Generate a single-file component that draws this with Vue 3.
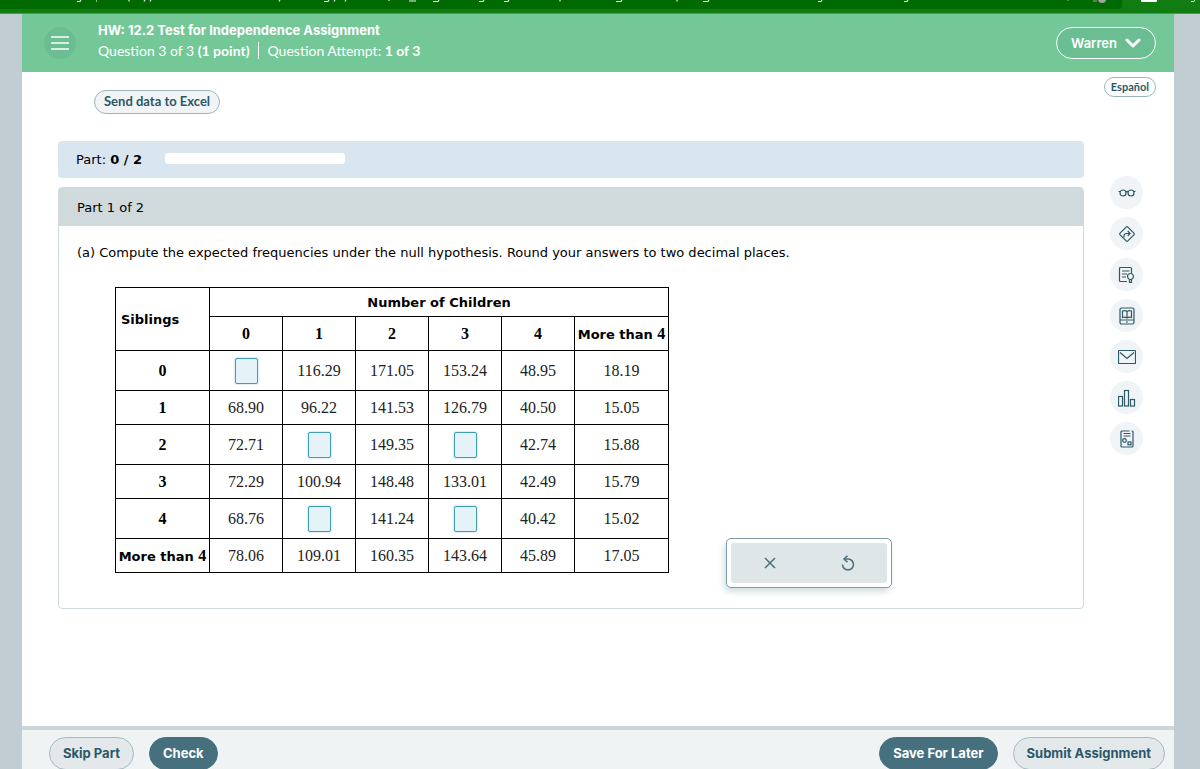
<script setup>
import { ref } from 'vue'

const columns = ['0', '1', '2', '3', '4']
const rows = ref([
  { label: '0', cells: ['', '116.29', '171.05', '153.24', '48.95', '18.19'] },
  { label: '1', cells: ['68.90', '96.22', '141.53', '126.79', '40.50', '15.05'] },
  { label: '2', cells: ['72.71', '', '149.35', '', '42.74', '15.88'] },
  { label: '3', cells: ['72.29', '100.94', '148.48', '133.01', '42.49', '15.79'] },
  { label: '4', cells: ['68.76', '', '141.24', '', '40.42', '15.02'] },
  { label: 'More than', num: '4', cells: ['78.06', '109.01', '160.35', '143.64', '45.89', '17.05'] }
])
const answers = ref({})
function clearAnswers() {
  answers.value = {}
}
</script>

<template>
  <div class="app">
    <div class="chrome" aria-hidden="true">
      <div class="address">
        <svg width="1120" height="9" viewBox="0 0 1120 9">
          <g fill="none" stroke="#e8f2e8" stroke-width="1.2">
            <path d="M81 0l-1 1.500h-3M484 0l-1 1.500h-4M509 0l-1 1.500h-4M622 0l-1 1.500h-5M709 0l-1 1.500h-5M822 0l-1 1.500h-3M908 0l-1 1.500h-3M329 0l-1 1.500h-4M439 0l-1 1.500h-5" />
            <path d="M129 0v1.500M145 0l-1 1.500M151 0l-1 1.500M280 0l-1 1.500M335 0l-1 1.500M346 0l-1 1.500M389 0v1M560 0v1.500M677 0v1.500M409 1h7" />
          </g>
          <path d="M96.500 0v2M1068 0v1" stroke="#8ab88a" />
          <circle cx="1102" cy="-1" r="4" fill="#a1a5a1" />
          <path d="M1093 1h4" stroke="#a1a5a1" />
        </svg>
      </div>
      <svg class="tools" width="78" height="4" viewBox="0 0 78 4">
        <path d="M19 0h16v1q0 1-1 1H20q-1 0-1-1z" fill="#fff" />
        <path d="M73 0l-1 1.500h-3" fill="none" stroke="#d6ead6" />
      </svg>
    </div>

    <div class="page">
      <header class="top">
        <button class="menu" type="button" aria-label="Menu">
          <svg width="18" height="14" viewBox="0 0 18 14"><path d="M0 1h18M0 7h18M0 13h18" stroke="#fff" stroke-width="1.500" /></svg>
        </button>
        <div class="titles">
          <div class="title">HW: 12.2 Test for Independence Assignment</div>
          <div class="meta">
            <span>Question 3 of 3 <b>(1 point)</b></span>
            <span class="attempt">Question Attempt: <b>1 of 3</b></span>
          </div>
        </div>
        <button class="user" type="button">
          Warren
          <svg width="16" height="11" viewBox="0 0 16 11"><path d="M2 2l6 6 6-6" fill="none" stroke="#fff" stroke-width="3" stroke-linecap="round" stroke-linejoin="round" /></svg>
        </button>
      </header>

      <div class="body">
        <main class="main">
          <button class="excel" type="button">Send data to Excel</button>

          <div class="progress">
            <span>Part: <b>0 / 2</b></span>
            <span class="track"></span>
          </div>

          <section class="panel">
            <h2>Part 1 of 2</h2>
            <div class="content">
              <p>(a) Compute the expected frequencies under the null hypothesis. Round your answers to two decimal places.</p>
              <div class="work">
                <table>
                  <colgroup>
                    <col class="wide" />
                    <col v-for="c in columns" :key="c" class="narrow" />
                    <col class="wide" />
                  </colgroup>
                  <thead>
                    <tr class="r-title">
                      <th rowspan="2" class="siblings" scope="col">Siblings</th>
                      <th colspan="6" scope="colgroup">Number of Children</th>
                    </tr>
                    <tr class="r-short">
                      <th v-for="c in columns" :key="c" scope="col"><span class="num">{{ c }}</span></th>
                      <th scope="col">More than <span class="num">4</span></th>
                    </tr>
                  </thead>
                  <tbody>
                    <tr v-for="(row, r) in rows" :key="r" :class="row.cells.includes('') ? 'r-tall' : 'r-short'">
                      <th scope="row">
                        <template v-if="row.num">{{ row.label }} <span class="num">{{ row.num }}</span></template>
                        <span v-else class="num">{{ row.label }}</span>
                      </th>
                      <td v-for="(cell, c) in row.cells" :key="c">
                        <template v-if="cell">{{ cell }}</template>
                        <input v-else v-model="answers[r + '-' + c]" type="text" :aria-label="'Expected frequency, siblings ' + row.label + ', children ' + c" />
                      </td>
                    </tr>
                  </tbody>
                </table>

                <div class="tray">
                  <div class="tray-in">
                    <button type="button" aria-label="Clear" @click="clearAnswers">
                      <svg width="12" height="12" viewBox="0 0 12 12"><path d="M1 1l10 10M11 1L1 11" stroke="#47707f" stroke-width="1.500" /></svg>
                    </button>
                    <button type="button" aria-label="Reset" @click="clearAnswers">
                      <svg width="14" height="16" viewBox="0 0 14 16" fill="none" stroke="#47707f" stroke-width="1.500"><path d="M1.500 9.500a5.500 5.500 0 1 0 5.500-5.500H3" /><path d="M6.500.800L3 4l3.500 3.200" /></svg>
                    </button>
                  </div>
                </div>
              </div>
            </div>
          </section>
        </main>

        <aside class="side">
          <button class="lang" type="button">Español</button>
          <nav class="rail" aria-label="Resources">
            <button type="button" aria-label="Reading view">
              <svg width="18" height="18" viewBox="0 0 18 18"><circle cx="5" cy="9" r="3" /><circle cx="13" cy="9" r="3" /><path d="M8 8q1-1 2 0M0.500 7.500h2M17.500 7.500h-2" /></svg>
            </button>
            <button type="button" aria-label="Directions">
              <svg width="18" height="18" viewBox="0 0 18 18"><rect x="3.500" y="3.500" width="11" height="11" rx="1.200" transform="rotate(45 9 9)" /><path d="M6 12.500V11q0-2.500 2.500-2.500H12M9.700 6l2.500 2.500L9.700 11" /></svg>
            </button>
            <button type="button" aria-label="Hints">
              <svg width="18" height="18" viewBox="0 0 18 18"><path d="M9 15.500H2.500q-1 0-1-1v-12q0-1 1-1h10q1 0 1 1V7M4 5h7.500M4 8h5M4 11h4" /><path d="M11.500 13.500q-2-1.500-2-3a3 3 0 0 1 6 0q0 1.500-2 3zM11.500 14v2.500h2V14" /></svg>
            </button>
            <button type="button" aria-label="Textbook">
              <svg width="18" height="18" viewBox="0 0 18 18"><rect x="2" y="1" width="14" height="16" rx="1.500" /><path d="M4.500 4Q7 3 9 4.500 11 3 13.500 4v6.500Q11 9.500 9 11 7 9.500 4.500 10.500zM9 4.500V11M2 13h14M8 15h2" /></svg>
            </button>
            <button type="button" aria-label="Messages">
              <svg width="18" height="18" viewBox="0 0 18 18"><rect x="0.500" y="2.500" width="17" height="13" rx="0.500" /><path d="M2 4.500l7 6 7-6" /></svg>
            </button>
            <button type="button" aria-label="Statistics">
              <svg width="18" height="18" viewBox="0 0 18 18"><rect x="0.500" y="7.500" width="4" height="9.500" /><rect x="6.500" y="1.500" width="4" height="15.500" /><rect x="12.500" y="10.500" width="4" height="6.500" /></svg>
            </button>
            <button type="button" aria-label="Formula sheet">
              <svg width="18" height="18" viewBox="0 0 18 18"><path d="M13.500 1h.500q1 0 1 1v14q0 1-1 1H4q-1 0-1-1V2q0-1 1-1h7.500M5.500 3.500h7M5.500 6h7" /><circle cx="6.500" cy="10.500" r="1.800" /><rect x="10" y="12" width="3" height="2.800" /></svg>
            </button>
          </nav>
        </aside>
      </div>

      <footer class="foot">
        <button class="btn light" type="button">Skip Part</button>
        <button class="btn dark" type="button">Check</button>
        <button class="btn dark push" type="button">Save For Later</button>
        <button class="btn light" type="button">Submit Assignment</button>
      </footer>
    </div>
  </div>
</template>

<style>
body {
  margin: 0;
  overflow: hidden;
}
</style>

<style scoped>
.app {
  display: flex;
  flex-direction: column;
  height: 100vh;
  overflow: hidden;
  background: #c1cdd3;
  font-family: "DejaVu Sans", Verdana, sans-serif;
  font-size: 13px;
  color: #000;
}
button {
  margin: 0;
  font-family: Lato, sans-serif;
  cursor: pointer;
}
svg {
  display: block;
  flex: none;
}
.chrome {
  display: flex;
  justify-content: space-between;
  align-items: flex-start;
  flex: none;
  height: 13px;
  background: #117c11;
  border-bottom: 1px solid #3f9f4c;
}
.address {
  flex: 1;
  overflow: hidden;
  background: #006a00;
  border-bottom-right-radius: 4px;
}
.page {
  display: flex;
  flex-direction: column;
  flex: 1;
  min-height: 0;
  margin: 0 26px 0 22px;
  background: #fff;
}
.top {
  display: flex;
  align-items: center;
  flex: none;
  height: 58px;
  padding: 0 18px 0 22px;
  background: #74c898;
  color: #fff;
  font-family: Lato, sans-serif;
  font-size: 14px;
}
.menu {
  display: grid;
  place-items: center;
  width: 32px;
  height: 32px;
  padding: 0;
  border: 0;
  border-radius: 50%;
  background: #6bbe92;
}
.titles {
  flex: 1;
  margin-left: 22px;
  padding-bottom: 7px;
}
.title {
  font-family: Inter, sans-serif;
  font-size: 13px;
  font-weight: 700;
  line-height: 21px;
}
.meta {
  display: flex;
  align-items: center;
  line-height: 17px;
  margin-top: 1px;
}
.attempt {
  margin-left: 8px;
  padding-left: 9px;
  border-left: 1px solid #fff;
}
.user {
  display: flex;
  align-items: center;
  justify-content: center;
  gap: 8px;
  width: 100px;
  height: 32px;
  padding: 0;
  border: 1px solid #fff;
  border-radius: 16px;
  background: #6bbe92;
  color: #fff;
  font-family: Inter, sans-serif;
  font-size: 13px;
  font-weight: 600;
}
.body {
  display: flex;
  flex: 1;
  min-height: 0;
}
.main {
  flex: 1;
  padding: 18px 0 0 36px;
}
.excel {
  display: block;
  height: 24px;
  margin-left: 36px;
  padding: 0 9px 2px;
  border: 1px solid #9db4bc;
  border-radius: 12px;
  background: #f0f4f6;
  color: #2c5868;
  font-size: 13px;
  font-weight: 700;
}
.progress {
  display: flex;
  align-items: center;
  gap: 23px;
  height: 37px;
  margin-top: 27px;
  padding-left: 18px;
  border-radius: 4px;
  background: #dae6ef;
}
.track {
  width: 180px;
  height: 11px;
  margin-bottom: 2px;
  border-radius: 3px;
  background: #fff;
}
.panel {
  margin-top: 9px;
  border: 1px solid #d0d9dc;
  border-radius: 4px;
}
h2 {
  margin: 0;
  padding: 2px 18px 0;
  background: #d0d9dc;
  font-size: 13px;
  font-weight: 400;
  line-height: 36px;
}
.content {
  padding: 16px 18px 20px;
}
p {
  margin: 0;
  line-height: 21px;
}
.work {
  display: flex;
  align-items: flex-end;
  gap: 57px;
  margin: 24px 0 0 38px;
}
table {
  flex: none;
  width: 554px;
  margin-bottom: 15px;
  border-collapse: collapse;
  table-layout: fixed;
}
.wide {
  width: 94px;
}
.narrow {
  width: 73px;
}
th,
td {
  padding: 1px 0 0;
  border: 1px solid #000;
  text-align: center;
  vertical-align: middle;
  white-space: nowrap;
}
th {
  font-weight: 700;
}
td,
.num {
  font-family: "Liberation Serif", "Times New Roman", serif;
  font-size: 16px;
}
td {
  color: #222;
}
.siblings {
  padding-left: 5px;
  text-align: left;
}
.r-title {
  height: 29px;
}
.r-short {
  height: 34px;
}
.r-tall {
  height: 40px;
}
td input {
  display: block;
  box-sizing: border-box;
  width: 23px;
  height: 26px;
  margin: 0 auto;
  padding: 0;
  border: 1px solid #3f9fb0;
  border-radius: 2px;
  background: #e5f3f8;
  box-shadow: 0 0 2px #8cc8d2;
  text-align: center;
}
.tray {
  width: 156px;
  padding: 4px;
  border: 1px solid #7d9da6;
  border-radius: 5px;
  background: #fff;
  box-shadow: -2px 4px 6px #d3dfe2;
}
.tray-in {
  display: flex;
  border-radius: 3px;
  background: #dfe6e8;
}
.tray button {
  display: grid;
  place-items: center;
  flex: 1;
  height: 40px;
  padding: 0;
  border: 0;
  background: none;
}
.side {
  display: flex;
  flex-direction: column;
  align-items: flex-end;
  width: 90px;
  padding-top: 5px;
}
.lang {
  height: 20px;
  margin-right: 18px;
  padding: 0 6px 1px;
  border: 1px solid #9db4bc;
  border-radius: 10px;
  background: #fff;
  color: #2c5868;
  font-size: 11px;
  font-weight: 700;
}
.rail {
  display: flex;
  flex-direction: column;
  gap: 8px;
  margin: 79px 31px 0 0;
}
.rail button {
  display: grid;
  place-items: center;
  width: 33px;
  height: 33px;
  padding: 0;
  border: 0;
  border-radius: 50%;
  background: #f0f4f6;
}
.rail svg {
  fill: none;
  stroke: #2c5868;
  stroke-width: 1.200;
}
.foot {
  display: flex;
  gap: 15px;
  flex: none;
  height: 32px;
  padding: 7px 9px 0 27px;
  border-top: 4px solid #cbd6da;
  background: #eff3f4;
}
.btn {
  box-sizing: border-box;
  height: 33px;
  padding: 0 13px 1px;
  border-radius: 17px;
  font-family: Inter, sans-serif;
  font-size: 13px;
  font-weight: 700;
}
.light {
  border: 1px solid #a4bac0;
  background: #e3e8eb;
  color: #2c5868;
}
.dark {
  border: 1px solid #47707f;
  background: #47707f;
  color: #fff;
}
.push {
  margin-left: auto;
}
</style>
